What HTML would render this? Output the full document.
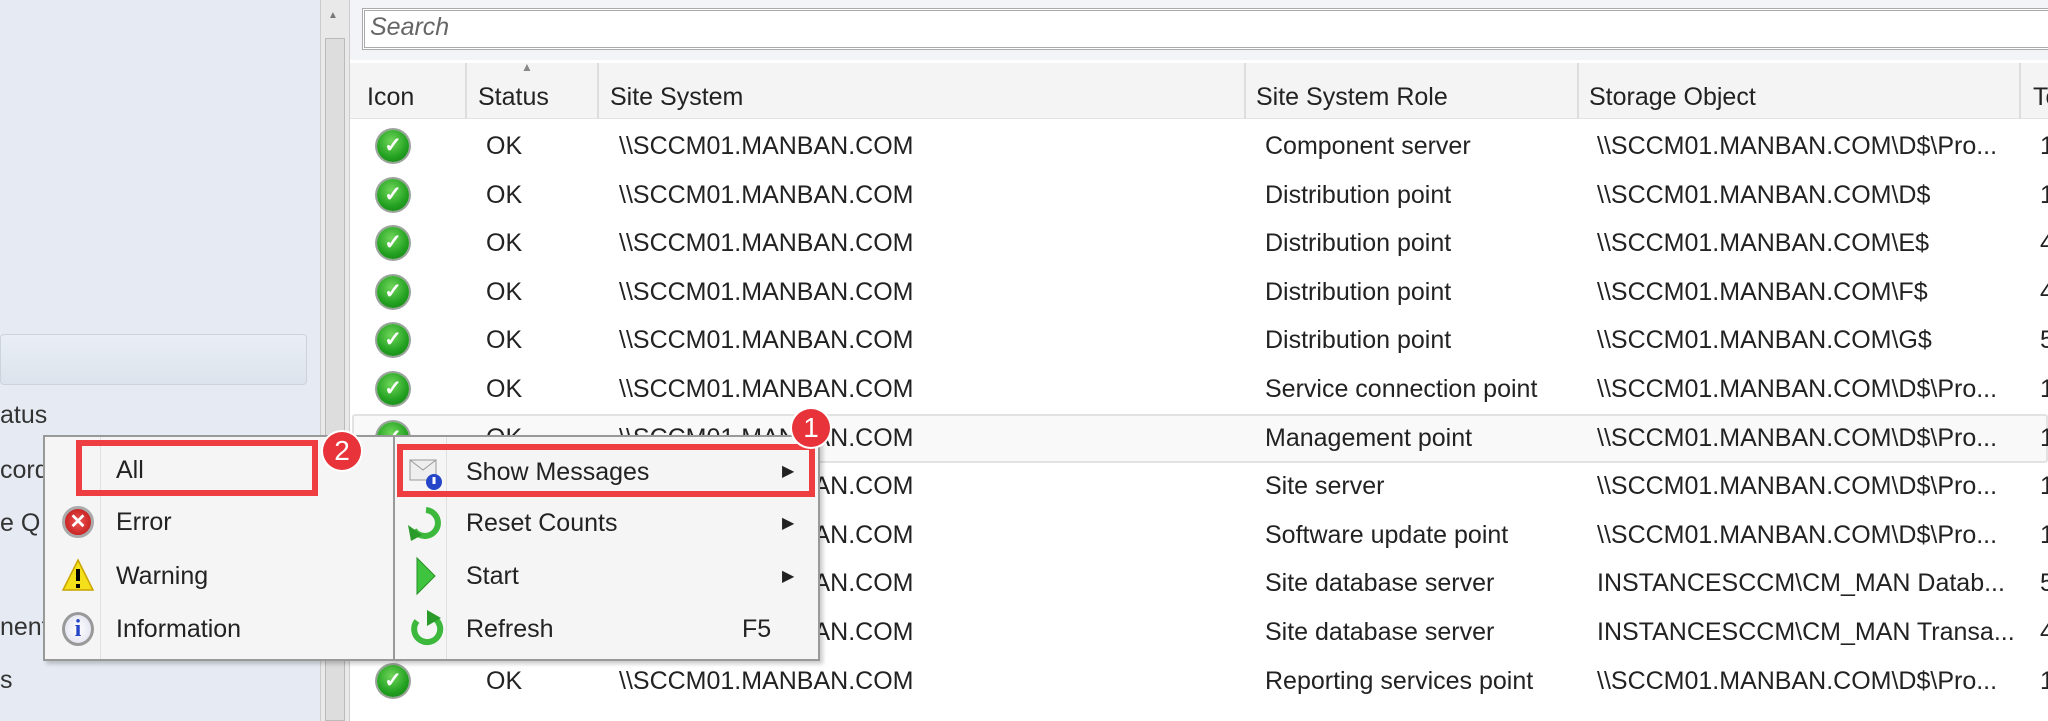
<!DOCTYPE html><html><head><style>
*{margin:0;padding:0;box-sizing:border-box}
body{width:2048px;height:721px;overflow:hidden;background:#fff;font-family:"Liberation Sans",sans-serif;color:#222;position:relative}
.a{position:absolute;white-space:nowrap}
.t{font-size:25px;line-height:30px}
.ic{position:absolute;width:32px;height:32px;border-radius:50%;background:radial-gradient(circle at 45% 35%,#6fd65a,#22a020 60%,#137a12);box-shadow:0 0 0 2px #9aa39a;color:#fff;font-size:21px;line-height:32px;text-align:center;font-weight:bold}
.hd{font-size:25px;color:#222}
.dv{position:absolute;top:63px;height:56px;width:2px;background:#ddd}
.red{position:absolute;border:6px solid #ef3e42}
.badge{position:absolute;width:38px;height:38px;border-radius:50%;background:#e8333a;color:#fff;font-size:28px;text-align:center;line-height:38px;box-shadow:0 0 0 2px #fff}
</style></head><body>
<div class="a" style="left:0;top:0;width:320px;height:721px;background:#e6ebf3"></div>
<div class="a" style="left:0;top:334px;width:307px;height:51px;border:1px solid #cdd3dc;border-radius:4px;background:linear-gradient(#e9eef6,#dde3ec)"></div>
<div class="a t" style="left:0;top:400px;color:#333">atus</div>
<div class="a t" style="left:0;top:455px;color:#333">cord</div>
<div class="a t" style="left:0;top:508px;color:#333">e Q</div>
<div class="a t" style="left:0;top:612px;color:#333">nent</div>
<div class="a t" style="left:0;top:665px;color:#333">s</div>
<div class="a" style="left:320px;top:0;width:30px;height:721px;background:#e9e9e9;border-left:1px solid #ccc;border-right:1px solid #ccc"></div>
<div class="a" style="left:325px;top:38px;width:20px;height:683px;background:#ddd;border:1px solid #bbb"></div>
<div class="a" style="left:328px;top:10px;font-size:10px;color:#777">▲</div>
<div class="a" style="left:350px;top:0;width:1698px;height:60px;background:#f2f4f7"></div>
<div class="a" style="left:362px;top:8px;width:1700px;height:42px;border:3px double #aaa;background:#fff"></div>
<div class="a" style="left:370px;top:13px;font-size:25px;font-style:italic;color:#666">Search</div>
<div class="a" style="left:350px;top:63px;width:1698px;height:56px;background:#f4f4f4;border-bottom:1px solid #e3e3e3"></div>
<div class="dv" style="left:465px"></div><div class="dv" style="left:597px"></div><div class="dv" style="left:1244px"></div><div class="dv" style="left:1577px"></div><div class="dv" style="left:2019px"></div>
<div class="a" style="left:521px;top:60px;font-size:12px;color:#888">▲</div>
<div class="a hd" style="left:367px;top:83px">Icon</div>
<div class="a hd" style="left:478px;top:83px">Status</div>
<div class="a hd" style="left:610px;top:83px">Site System</div>
<div class="a hd" style="left:1256px;top:83px">Site System Role</div>
<div class="a hd" style="left:1589px;top:83px">Storage Object</div>
<div class="a hd" style="left:2033px;top:83px">To</div>
<div class="a" style="left:352px;top:414px;width:1696px;height:49px;border:2px solid #e2e2e2;border-radius:3px;background:#f9f9f9"></div>
<div id="rows"></div>
<script>
var roles=["Component server","Distribution point","Distribution point","Distribution point","Distribution point","Service connection point","Management point","Site server","Software update point","Site database server","Site database server","Reporting services point"];
var st=["\\\\SCCM01.MANBAN.COM\\D$\\Pro...","\\\\SCCM01.MANBAN.COM\\D$","\\\\SCCM01.MANBAN.COM\\E$","\\\\SCCM01.MANBAN.COM\\F$","\\\\SCCM01.MANBAN.COM\\G$","\\\\SCCM01.MANBAN.COM\\D$\\Pro...","\\\\SCCM01.MANBAN.COM\\D$\\Pro...","\\\\SCCM01.MANBAN.COM\\D$\\Pro...","\\\\SCCM01.MANBAN.COM\\D$\\Pro...","INSTANCESCCM\\CM_MAN Datab...","INSTANCESCCM\\CM_MAN Transa...","\\\\SCCM01.MANBAN.COM\\D$\\Pro..."];
var last=["1","1","4","4","5","1","1","1","1","5","4","1"];
var h="";
for(var i=0;i<12;i++){var y=146+i*48.6;
h+='<div class="ic" style="left:377px;top:'+(y-16)+'px">✓</div>';
h+='<div class="a t" style="left:486px;top:'+(y-15)+'px">OK</div>';
h+='<div class="a t" style="left:619px;top:'+(y-15)+'px">\\\\SCCM01.MANBAN.COM</div>';
h+='<div class="a t" style="left:1265px;top:'+(y-15)+'px">'+roles[i]+'</div>';
h+='<div class="a t" style="left:1597px;top:'+(y-15)+'px">'+st[i]+'</div>';
h+='<div class="a t" style="left:2040px;top:'+(y-15)+'px">'+last[i]+'</div>';}
document.getElementById("rows").innerHTML=h;
</script>
<!-- menus -->
<div class="a" style="left:43px;top:435px;width:352px;height:226px;background:#f5f5f5;border:2px solid #999;box-shadow:3px 3px 4px rgba(0,0,0,.2)"></div>
<div class="a" style="left:100px;top:437px;width:1px;height:222px;background:#e0e0e0"></div>
<div class="a" style="left:393px;top:435px;width:427px;height:226px;background:#f5f5f5;border:2px solid #999;box-shadow:3px 3px 4px rgba(0,0,0,.2)"></div>
<div class="a" style="left:446px;top:437px;width:1px;height:222px;background:#e0e0e0"></div>
<div class="a t" style="left:116px;top:455px">All</div>
<div class="a t" style="left:116px;top:507px">Error</div>
<div class="a t" style="left:116px;top:561px">Warning</div>
<div class="a t" style="left:116px;top:614px">Information</div>
<div class="a" style="left:62px;top:506px;width:32px;height:32px;border-radius:50%;background:radial-gradient(#e55,#b11);border:3px solid #aaa;color:#fff;font-size:20px;font-weight:bold;text-align:center;line-height:26px">✕</div>
<svg class="a" style="left:61px;top:558px" width="34" height="34"><path d="M17 2 L32 32 L2 32Z" fill="#f4e01a" stroke="#c9a400" stroke-width="1.5"/><rect x="15" y="11" width="4" height="12" fill="#000"/><rect x="15" y="26" width="4" height="4" fill="#000"/></svg>
<div class="a" style="left:62px;top:612px;width:32px;height:34px;border-radius:50%;background:radial-gradient(#fff,#dde);border:3px solid #999;color:#2546c8;font-size:24px;font-weight:bold;text-align:center;line-height:28px;font-family:'Liberation Serif',serif">i</div>
<div class="a t" style="left:466px;top:457px">Show Messages</div>
<div class="a t" style="left:466px;top:508px">Reset Counts</div>
<div class="a t" style="left:466px;top:561px">Start</div>
<div class="a t" style="left:466px;top:614px">Refresh</div>
<div class="a t" style="left:742px;top:614px">F5</div>
<div class="a" style="left:782px;top:461px;font-size:16px">▶</div>
<div class="a" style="left:782px;top:513px;font-size:16px">▶</div>
<div class="a" style="left:782px;top:566px;font-size:16px">▶</div>
<svg class="a" style="left:408px;top:455px" width="36" height="36"><rect x="2" y="5" width="26" height="20" fill="#eee" stroke="#999"/><path d="M2 5 L15 15 L28 5" fill="none" stroke="#999"/><circle cx="26" cy="27" r="8" fill="#2546c8"/><rect x="24.5" y="22" width="3" height="7" fill="#fff"/></svg>
<svg class="a" style="left:408px;top:505px" width="36" height="38"><path d="M18 5 A13 13 0 1 1 6 25" fill="none" stroke="#3cb83c" stroke-width="6"/><path d="M0 20 L14 30 L3 36Z" fill="#2a9a2a"/></svg>
<svg class="a" style="left:415px;top:556px" width="22" height="40"><path d="M2 2 L20 20 L2 38Z" fill="#3ec43e" stroke="#249024"/></svg>
<svg class="a" style="left:408px;top:610px" width="36" height="38"><path d="M9 11 A13 13 0 1 0 24 7" fill="none" stroke="#3cb83c" stroke-width="6"/><path d="M19 0 L33 8 L19 16Z" fill="#2a9a2a"/></svg>
<div class="red" style="left:76px;top:440px;width:242px;height:56px"></div>
<div class="red" style="left:397px;top:444px;width:418px;height:53px"></div>
<div class="badge" style="left:323px;top:432px">2</div>
<div class="badge" style="left:792px;top:409px">1</div>
</body></html>
